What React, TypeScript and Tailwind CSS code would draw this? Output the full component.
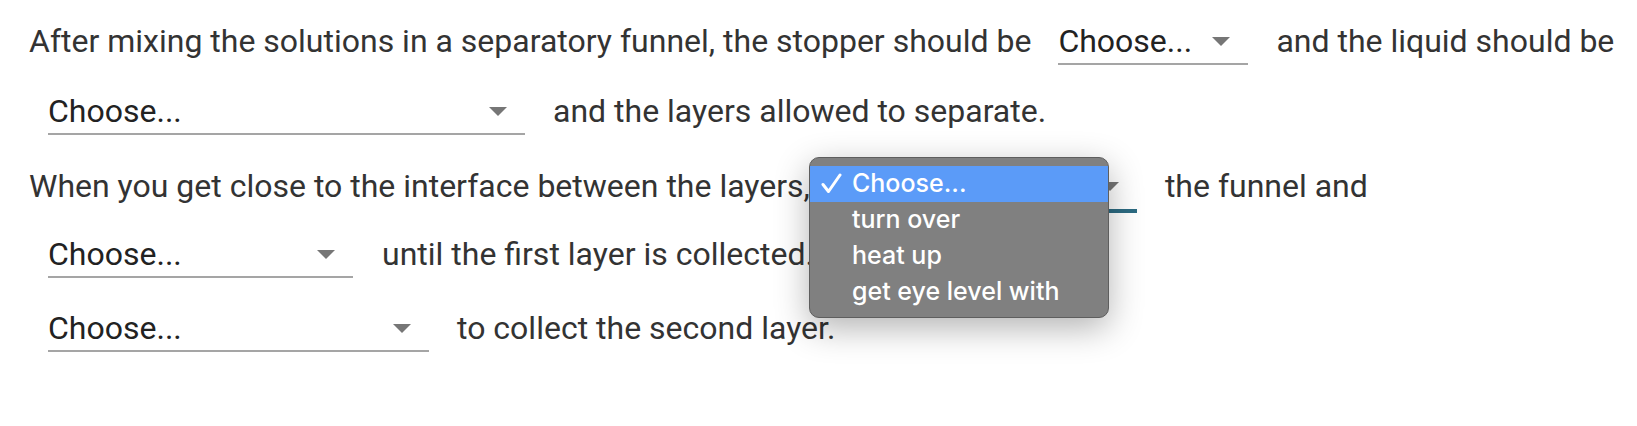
import React from 'react';

type SelectProps = {
  width: string;
  className?: string;
  focused?: boolean;
};

function FakeSelect({ width, className = '', focused = false }: SelectProps) {
  return (
    <div
      className={`flex items-center justify-between shrink-0 text-[#222222] ${width} ${className} ${
        focused ? 'pb-[4px] border-b-[4px] border-[#2c6b82]' : 'pb-[3px] border-b-2 border-[#a5a5a5]'
      }`}
    >
      <span>Choose...</span>
      <span className="mr-[18px] w-0 h-0 border-x-[9px] border-x-transparent border-t-[9px] border-t-[#767676]" />
    </div>
  );
}

const options = ['Choose...', 'turn over', 'heat up', 'get eye level with'];

export default function App() {
  return (
    <div className="relative min-h-[426px] bg-white">
      <div
        className="flex flex-col pl-[29px] pt-[22px] text-[32px] leading-[38px] text-[#333333]"
        style={{ fontFamily: 'Roboto, "Liberation Sans", sans-serif' }}
      >
        {/* line 1 */}
        <div className="flex items-start h-[70px] whitespace-nowrap">
          <span>After mixing the solutions in a separatory funnel, the stopper should be</span>
          <FakeSelect width="w-[190px]" className="ml-[27px] mr-[28px]" />
          <span>and the liquid should be</span>
        </div>

        {/* line 2 */}
        <div className="flex items-start h-[75px] whitespace-nowrap">
          <FakeSelect width="w-[477px]" className="ml-[19px] mr-[28px]" />
          <span>and the layers allowed to separate.</span>
        </div>

        {/* line 3 */}
        <div className="flex items-start h-[68px] whitespace-nowrap">
          <span>When you get close to the interface between the layers,</span>
          <FakeSelect width="w-[299px]" className="ml-[28px] mr-[28px]" focused />
          <span>the funnel and</span>
        </div>

        {/* line 4 */}
        <div className="flex items-start h-[74px] whitespace-nowrap">
          <FakeSelect width="w-[305px]" className="ml-[19px] mr-[29px]" />
          <span>until the first layer is collected.</span>
        </div>

        {/* line 5 */}
        <div className="flex items-start whitespace-nowrap">
          <FakeSelect width="w-[381px]" className="ml-[19px] mr-[28px]" />
          <span>to collect the second layer.</span>
        </div>
      </div>

      {/* open native menu */}
      <div
        className="absolute left-[809px] top-[157px] w-[300px] h-[161px] rounded-[10px] bg-[#808080] border border-[#5e5e5e] pt-[8px] shadow-[0_10px_34px_rgba(0,0,0,0.3)] text-white text-[25px] font-medium"
        style={{ fontFamily: 'Inter, "Liberation Sans", sans-serif' }}
      >
        {options.map((o, i) => (
          <div
            key={o}
            className={`flex items-center h-[36px] leading-[36px] pb-[2px] ${i === 0 ? 'bg-[#5b9bf8]' : ''}`}
          >
            <span className="flex items-center w-[42px] pl-[11px]">
              {i === 0 && (
                <svg width="21" height="21" viewBox="0 0 21 21" fill="none">
                  <path
                    d="M2 11.5 L7.5 18.5 L19 2"
                    stroke="white"
                    strokeWidth="3"
                    strokeLinecap="round"
                    strokeLinejoin="round"
                  />
                </svg>
              )}
            </span>
            <span>{o}</span>
          </div>
        ))}
      </div>
    </div>
  );
}
